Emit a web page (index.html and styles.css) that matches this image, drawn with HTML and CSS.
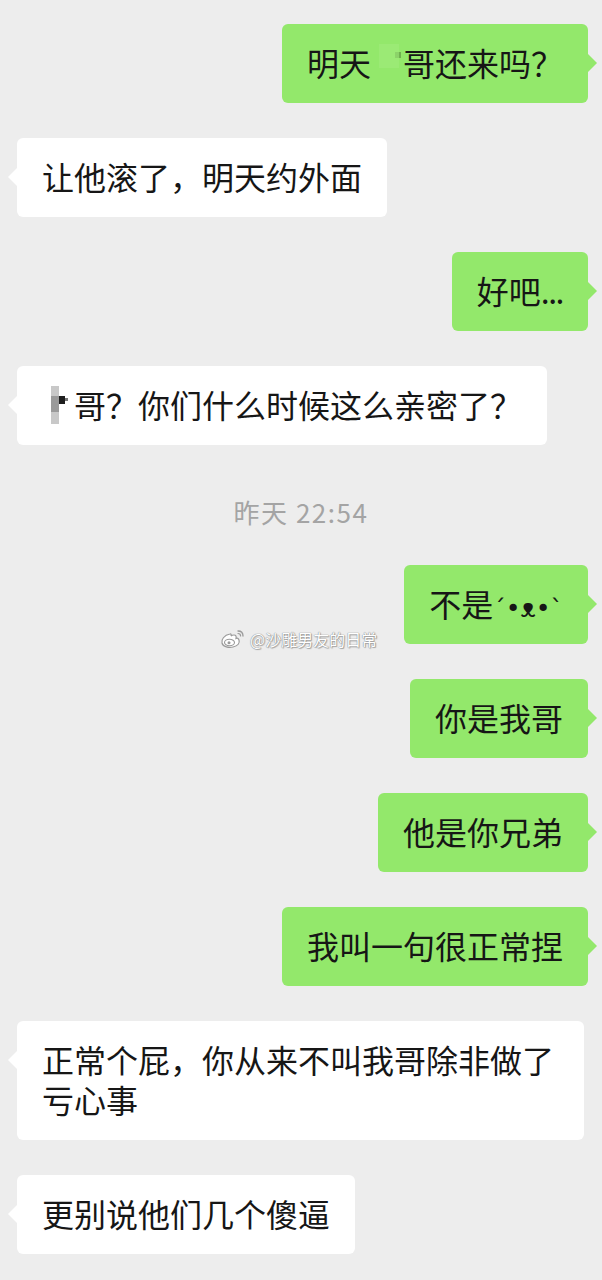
FILE: index.html
```html
<!DOCTYPE html>
<html lang="zh">
<head>
  <meta charset="UTF-8" />
  <meta name="viewport" content="width=device-width, initial-scale=1" />
  <title>聊天</title>
  <link rel="stylesheet" href="styles.css">
</head>

<body>
  <div class="chat">
    <div class="row me">
      <div class="bubble">明天<span class="blur blur-green"><i class="c1"></i><i class="c2"></i></span>哥还来吗？</div>
    </div>
    <div class="row them">
      <div class="bubble">让他滚了，明天约外面</div>
    </div>
    <div class="row me">
      <div class="bubble">好吧<span class="dots">...</span></div>
    </div>
    <div class="row them">
      <div class="bubble"><span class="blur blur-gray"><i class="g1"></i><i class="g2"></i><i class="g3"></i><i class="g4"></i></span>哥？你们什么时候这么亲密了？</div>
    </div>

    <div class="time">昨天 22:54</div>

    <div class="row me">
      <div class="bubble">不是<span class="kao">´•ᴥ•`</span></div>
      <div class="watermark">
        <svg class="weibo" width="26" height="22" viewBox="0 0 26 22">
          <path d="M10 6 C4 7 1 12 2 15 C3 19 9 20 13 19 C18 18 20 15 19 12 C18.5 10 17 10 16 10.5 C16.5 8.5 16 7 14 7 C12.5 7 11.5 7.5 11 8 C11.5 6.5 11 5.8 10 6 Z" fill="#fff" stroke="#9a9a9a" stroke-width="1.2"/>
          <ellipse cx="9.5" cy="14.5" rx="5" ry="3.2" fill="none" stroke="#9a9a9a" stroke-width="1.1"/>
          <circle cx="9" cy="14.8" r="1.5" fill="#9a9a9a"/>
          <path d="M18 3 C21 3 23 5 23 8" fill="none" stroke="#9a9a9a" stroke-width="1.3" stroke-linecap="round"/>
          <path d="M18 5.5 C19.5 5.5 20.6 6.5 20.6 8" fill="none" stroke="#9a9a9a" stroke-width="1.2" stroke-linecap="round"/>
        </svg>
        <span>@沙雕男友的日常</span>
      </div>
    </div>
    <div class="row me">
      <div class="bubble">你是我哥</div>
    </div>
    <div class="row me">
      <div class="bubble">他是你兄弟</div>
    </div>
    <div class="row me">
      <div class="bubble">我叫一句很正常捏</div>
    </div>
    <div class="row them">
      <div class="bubble">正常个屁，你从来不叫我哥除非做了亏心事</div>
    </div>
    <div class="row them">
      <div class="bubble">更别说他们几个傻逼</div>
    </div>
  </div>
</body>
</html>
```

FILE: styles.css
```css
body {
  margin: 0;
  background-color: #ededed;
  font-family: "Noto Sans CJK SC", "Noto Sans", sans-serif;
  color: #161616;
}

.chat {
  padding-top: 24px;
  width: 602px;
}

.row {
  display: flex;
  margin-bottom: 35px;
  position: relative;
}

.row.me {
  justify-content: flex-end;
  padding-right: 14px;
}

.row.them {
  justify-content: flex-start;
  padding-left: 17px;
}

.bubble {
  position: relative;
  box-sizing: border-box;
  max-width: 567px;
  padding: 18px 25px 21px;
  font-size: 32px;
  line-height: 40px;
  border-radius: 6px;
  background: #fff;
}

.me .bubble {
  background: #93e86b;
}

.bubble::after {
  content: "";
  position: absolute;
  top: 30px;
  width: 0;
  height: 0;
  border-top: 9px solid transparent;
  border-bottom: 9px solid transparent;
}

.me .bubble::after {
  right: -9px;
  border-left: 9px solid #93e86b;
}

.them .bubble::after {
  left: -9px;
  border-right: 9px solid #fff;
}

.time {
  text-align: center;
  font-size: 26px;
  line-height: 30px;
  letter-spacing: 1.5px;
  color: #a4a4a4;
  margin-top: 52px;
  margin-bottom: 38px;
}

.dots {
  letter-spacing: -1.5px;
}

.kao {
  font-family: "DejaVu Sans", sans-serif;
  font-size: 25px;
  line-height: 0;
}

/* mosaic over the hidden name */
.blur {
  display: inline-block;
  width: 32px;
  height: 40px;
  vertical-align: top;
  position: relative;
}

.blur i {
  position: absolute;
  display: block;
}

.blur-green .c1 {
  left: 24px;
  top: 10px;
  width: 6px;
  height: 6px;
  background: #6fb04f;
}

.blur-green .c2 {
  left: 8px;
  top: 2px;
  width: 20px;
  height: 24px;
  background: #a0eb7c;
  opacity: 0.6;
}

.blur-gray .g1 {
  left: 9px;
  top: 2px;
  width: 8px;
  height: 38px;
  background: #c8c8c8;
}

.blur-gray .g2 {
  left: 9px;
  top: 12px;
  width: 8px;
  height: 16px;
  background: #9a9a9a;
}

.blur-gray .g3 {
  left: 17px;
  top: 12px;
  width: 6px;
  height: 8px;
  background: #1e1e1e;
}

.blur-gray .g4 {
  left: 23px;
  top: 14px;
  width: 3px;
  height: 3px;
  background: #777;
}

.watermark {
  position: absolute;
  left: 220px;
  top: 62px;
  display: flex;
  align-items: center;
  gap: 4px;
  font-size: 16px;
  color: #fff;
  text-shadow: 0 0 1px #8a8a8a, 0 0 1px #8a8a8a, 1px 1px 1px #aaa;
}
```
